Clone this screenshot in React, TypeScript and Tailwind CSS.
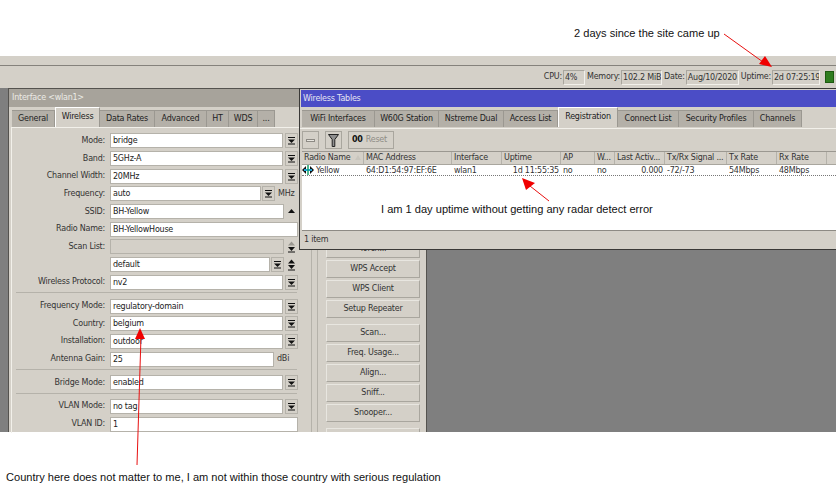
import React from "react";

function SelBtn({ className = "" }: { className?: string }) {
  return (
    <div className={`w-[13px] h-[15px] shrink-0 bg-[#d4d0c8] border border-[#b5b2aa] flex items-center justify-center ${className}`}>
      <svg width="9" height="9" viewBox="0 0 9 9">
        <rect x="1" y="1" width="7" height="1" fill="#111" />
        <path d="M1 3.5h7L4.5 7z" fill="#111" />
        <rect x="1" y="7.5" width="7" height="1" fill="#111" />
      </svg>
    </div>
  );
}

function UpDown({ dimUp = false, upOnly = false }: { dimUp?: boolean; upOnly?: boolean }) {
  return (
    <div className="w-[13px] h-[15px] shrink-0 flex items-center justify-center">
      <svg width="9" height="13" viewBox="0 0 9 13">
        {upOnly ? (
          <path d="M1 8h7L4.5 4z" fill="#111" />
        ) : (
          <>
            <path d="M1 5.5h7L4.5 1.5z" fill={dimUp ? "#9a9790" : "#111"} />
            <path d="M1 7h7L4.5 11z" fill="#111" />
            <rect x="1" y="11.5" width="7" height="1" fill="#111" />
          </>
        )}
      </svg>
    </div>
  );
}

function Input({ v, disabled = false, className = "" }: { v?: string; disabled?: boolean; className?: string }) {
  return (
    <div
      className={`h-[15px] min-w-0 border border-[#b5b2aa] px-[2px] leading-[13px] text-[#222] whitespace-nowrap overflow-hidden ${disabled ? "bg-[#d4d0c8]" : "bg-white"} ${className}`}
    >
      {v}
    </div>
  );
}

function Row({ label, children }: { label?: string; children: React.ReactNode }) {
  return (
    <div className="flex items-center h-[17.7px] shrink-0">
      <div className="w-[93px] text-right text-[#333] whitespace-nowrap">{label ? label + ":" : ""}</div>
      <div className="ml-[5px] flex-1 flex items-center gap-[1px] min-w-0">{children}</div>
    </div>
  );
}

function SelRow({ label, v }: { label: string; v: string }) {
  return (
    <Row label={label}>
      <Input v={v} className="flex-1" />
      <SelBtn className="ml-[1px]" />
    </Row>
  );
}

function Divider() {
  return (
    <div className="h-[6px] relative">
      <div className="absolute left-[4px] right-[1px] top-[1px] border-t border-[#b5b2aa]" />
    </div>
  );
}

function Tab({ t, active = false, w }: { t: string; active?: boolean; w: string }) {
  return (
    <div
      className={`${w} shrink-0 flex items-center justify-center border-t border-r border-[#9b9891] whitespace-nowrap text-[#222] ${
        active ? "h-[20px] bg-[#d4d0c8] border-l border-l-white border-t-white pb-[2px]" : "h-[17px] mt-[3px] bg-[#b4b0a8]"
      }`}
    >
      {t}
    </div>
  );
}

function Cell({ w, children, right = false, className = "" }: { w: string; children?: React.ReactNode; right?: boolean; className?: string }) {
  return (
    <div className={`${w} shrink-0 px-[2px] whitespace-nowrap overflow-hidden ${right ? "text-right" : ""} ${className}`}>
      {children}
    </div>
  );
}

const cols = ["w-[62px]", "w-[88px]", "w-[50px]", "w-[59px]", "w-[34px]", "w-[20px]", "w-[50px]", "w-[62px]", "w-[50px]", "w-[50px]", "w-[10px]"];
const heads = ["Radio Name", "MAC Address", "Interface", "Uptime", "AP", "W...", "Last Activ...", "Tx/Rx Signal ...", "Tx Rate", "Rx Rate", ""];

function Stat({ label, v, w }: { label: string; v: string; w: string }) {
  return (
    <div className="flex items-center gap-[1px]">
      <span>{label}:</span>
      <span className={`${w} h-[15px] leading-[13px] border border-[#f2f0ea] border-l-[#a9a69e] border-t-[#a9a69e] px-[1px] whitespace-nowrap overflow-hidden`}>{v}</span>
    </div>
  );
}

function SideBtn({ t, className = "" }: { t?: string; className?: string }) {
  return (
    <div className={`w-[94px] h-[18px] shrink-0 border border-[#a9a69e] border-t-[#e8e6e0] border-l-[#e8e6e0] flex items-center justify-center text-[#333] ${className}`}>
      {t}
    </div>
  );
}

const noteCls = "absolute text-[11.07px] tracking-normal leading-[14px] text-[#111] font-['Liberation_Sans',sans-serif] whitespace-nowrap";

export default function App() {
  return (
    <div className="relative w-[836px] h-[490px] bg-white overflow-hidden text-[8px] tracking-[-0.22px] font-['DejaVu_Sans',sans-serif]">
      <div className="h-[56px]" />
      <div className="h-[10px] bg-[#d4d0c8] border-b border-[#85827c]" />
      <div className="h-[22px] bg-[#d4d0c8] flex items-center justify-end gap-[2px] pr-[2px] text-[#333]">
        <Stat label="CPU" v="4%" w="w-[22px]" />
        <Stat label="Memory" v="102.2 MiB" w="w-[41px]" />
        <Stat label="Date" v="Aug/10/2020" w="w-[53px]" />
        <Stat label="Uptime" v="2d 07:25:19" w="w-[48px]" />
        <div className="w-[9px] h-[12px] ml-[3px] bg-[#2f7d1f] border border-[#1d5a10]" />
      </div>

      <div className="relative h-[344px] bg-[#7f7f7f]">
        {/* Interface window */}
        <div className="absolute left-[8px] top-0 w-[291px] h-[344px] bg-[#d4d0c8] border-t border-l border-[#55534f] flex flex-col">
          <div className="h-[18px] shrink-0 bg-[#a7a39b] text-[#ecebe6] pl-[3px] flex items-center">Interface &lt;wlan1&gt;</div>
          <div className="flex h-[20px] shrink-0 pl-[3px] bg-[#d4d0c8]">
            <Tab t="General" w="w-[43px]" />
            <Tab t="Wireless" active w="w-[45px]" />
            <Tab t="Data Rates" w="w-[55px]" />
            <Tab t="Advanced" w="w-[52px]" />
            <Tab t="HT" w="w-[22px]" />
            <Tab t="WDS" w="w-[29px]" />
            <Tab t="..." w="w-[17px]" />
          </div>
          <div className="flex-1 border-t border-l border-[#f2f0ea] ml-[2px] pt-[4px] pr-[1px]">
            <SelRow label="Mode" v="bridge" />
            <SelRow label="Band" v="5GHz-A" />
            <SelRow label="Channel Width" v="20MHz" />
            <Row label="Frequency">
              <Input v="auto" className="flex-1" />
              <SelBtn />
              <span className="w-[20px] ml-[2px] text-[#333] whitespace-nowrap">MHz</span>
            </Row>
            <Row label="SSID">
              <Input v="BH-Yellow" className="flex-1" />
              <UpDown upOnly />
            </Row>
            <Row label="Radio Name">
              <Input v="BH-YellowHouse" className="flex-1" />
            </Row>
            <Row label="Scan List">
              <Input disabled className="flex-1" />
              <UpDown dimUp />
            </Row>
            <Row>
              <div className="flex-1 flex gap-[1px] min-w-0">
                <Input v="default" className="flex-1" />
                <SelBtn />
              </div>
              <UpDown />
            </Row>
            <SelRow label="Wireless Protocol" v="nv2" />
            <Divider />
            <SelRow label="Frequency Mode" v="regulatory-domain" />
            <SelRow label="Country" v="belgium" />
            <SelRow label="Installation" v="outdoor" />
            <Row label="Antenna Gain">
              <Input v="25" className="flex-1" />
              <span className="w-[21px] ml-[2px] text-[#333]">dBi</span>
            </Row>
            <Divider />
            <SelRow label="Bridge Mode" v="enabled" />
            <Divider />
            <SelRow label="VLAN Mode" v="no tag" />
            <Row label="VLAN ID">
              <Input v="1" className="flex-1" />
            </Row>
          </div>
        </div>

        {/* Panel behind tables */}
        <div className="absolute left-[299px] top-[150px] w-[128px] h-[194px] bg-[#d4d0c8] border-r border-[#55534f] flex overflow-hidden">
          <div className="w-[13px] border-r border-[#b5b2aa]" />
          <div className="w-[6px] border-r border-[#b5b2aa]" />
          <div className="flex-1 flex flex-col gap-[2px] pl-[8px] mt-[2px]">
            <SideBtn t="Torch..." />
            <SideBtn t="WPS Accept" />
            <SideBtn t="WPS Client" />
            <SideBtn t="Setup Repeater" />
            <SideBtn t="Scan..." className="mt-[4px]" />
            <SideBtn t="Freq. Usage..." />
            <SideBtn t="Align..." />
            <SideBtn t="Sniff..." />
            <SideBtn t="Snooper..." />
            <SideBtn className="mt-[4px]" />
          </div>
        </div>

        {/* Wireless Tables window */}
        <div className="absolute left-[299px] top-0 w-[537px] h-[162px] bg-[#d4d0c8] border border-[#3a3937] border-r-0 flex flex-col">
          <div className="h-[17px] mt-[1px] ml-[1px] shrink-0 bg-[#4b4dc6] text-[#e6e6f2] pl-[2px] flex items-center">Wireless Tables</div>
          <div className="flex h-[21px] shrink-0 pl-[2px]">
            <Tab t="WiFi Interfaces" w="w-[73px]" />
            <Tab t="W60G Station" w="w-[64px]" />
            <Tab t="Nstreme Dual" w="w-[65px]" />
            <Tab t="Access List" w="w-[54px]" />
            <Tab t="Registration" active w="w-[60px]" />
            <Tab t="Connect List" w="w-[61px]" />
            <Tab t="Security Profiles" w="w-[75px]" />
            <Tab t="Channels" w="w-[48px]" />
          </div>
          <div className="border-t border-[#f2f0ea] flex items-center h-[23px] shrink-0 pl-[2px] gap-[6px]">
            <div className="w-[17px] h-[18px] border border-[#a9a69e] flex items-center justify-center">
              <div className="w-[9px] h-[3px] border border-[#8d8a84] bg-[#e8e6e0]" />
            </div>
            <div className="w-[17px] h-[18px] border border-[#a9a69e] flex items-center justify-center">
              <svg width="11" height="13" viewBox="0 0 11 13">
                <path d="M0.5 0.5h10L6.8 5.5v7H4.2v-7z" fill="#8f8f8f" stroke="#222" strokeWidth="1" />
              </svg>
            </div>
            <div className="w-[46px] h-[18px] border border-[#a9a69e] flex items-center pl-[3px] gap-[3px]">
              <span className="font-bold text-[#111]">00</span>
              <span className="text-[#8f8c86]">Reset</span>
            </div>
          </div>
          <div className="flex h-[13px] shrink-0 ml-[2px] border-t border-[#9b9891] leading-[12px] text-[#333]">
            {heads.map((h, i) => (
              <Cell key={i} w={cols[i]} className="border-r border-[#b5b2aa] relative">
                {h}
                {i === 0 && <span className="absolute right-[2px] top-[3px] w-0 h-0 border-l-[3px] border-r-[3px] border-b-[5px] border-transparent border-b-[#c8c5bd]" />}
              </Cell>
            ))}
          </div>
          <div className="flex-1 ml-[2px] bg-white border-t border-[#a9a69e] text-[#333]">
            <div className="flex h-[11px] leading-[11px] border-b border-dotted border-[#777]">
              <Cell w={cols[0]} className="flex items-center gap-[2px] !px-0">
                <svg width="12" height="10" viewBox="0 0 12 10" className="shrink-0">
                  <path d="M0 5L4 1v8zM12 5L8 1v8z" fill="#111" />
                  <rect x="2" y="4" width="8" height="2" fill="#1ca6d8" />
                  <path d="M6 0v10" stroke="#16a06a" strokeWidth="1.5" />
                </svg>
                <span>Yellow</span>
              </Cell>
              <Cell w={cols[1]}>64:D1:54:97:EF:6E</Cell>
              <Cell w={cols[2]}>wlan1</Cell>
              <Cell w={cols[3]} right>1d 11:55:35</Cell>
              <Cell w={cols[4]}>no</Cell>
              <Cell w={cols[5]}>no</Cell>
              <Cell w={cols[6]} right>0.000</Cell>
              <Cell w={cols[7]}>-72/-73</Cell>
              <Cell w={cols[8]}>54Mbps</Cell>
              <Cell w={cols[9]}>48Mbps</Cell>
            </div>
          </div>
          <div className="h-[19px] shrink-0 ml-[2px] flex items-center pl-[2px] text-[#333] border-t border-[#8d8a84]">1 item</div>
        </div>
      </div>

      {/* Annotations */}
      <div className={`${noteCls} left-[574px] top-[26px]`}>2 days since the site came up</div>
      <div className={`${noteCls} left-[381px] top-[202px]`}>I am 1 day uptime without getting any radar detect error</div>
      <div className={`${noteCls} left-[6px] top-[470px]`}>Country here does not matter to me, I am not within those country with serious regulation</div>
      <svg className="absolute left-0 top-0 pointer-events-none" width="836" height="490" viewBox="0 0 836 490">
        <path d="M724 34L763 62" stroke="#e81010" strokeWidth="1" />
        <path d="M772 67L759 64L765 56z" fill="#f00000" />
        <path d="M549 201L530 186" stroke="#e81010" strokeWidth="1" />
        <path d="M522 178L535 183L526 190z" fill="#f00000" />
        <path d="M137 465L141 336" stroke="#e81010" strokeWidth="1" />
        <path d="M140 328L145 339H135z" fill="#f00000" />
      </svg>
    </div>
  );
}
